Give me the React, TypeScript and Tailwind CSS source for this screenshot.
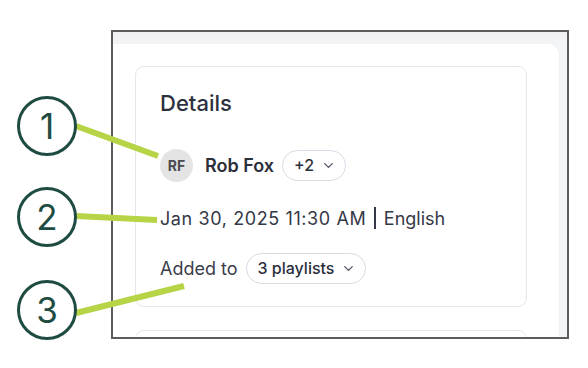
import { ChevronDown } from "lucide-react";

function Pill({ label }: { label: string }) {
  return (
    <span className="inline-flex h-[31px] items-center gap-[7px] rounded-full border border-[#d9dbe4] bg-white pl-[11px] pr-[9px] text-[16px] font-medium text-[#2b2e3b]">
      {label}
      <ChevronDown className="h-[15px] w-[15px] text-[#555866]" strokeWidth={2.2} />
    </span>
  );
}

function Callouts() {
  const circles = [
    { cy: 126, n: "1" },
    { cy: 217, n: "2" },
    { cy: 310, n: "3" },
  ];
  return (
    <svg className="pointer-events-none absolute inset-0" width={588} height={368} viewBox="0 0 588 368">
      <g stroke="#b6d445" strokeWidth={6}>
        <line x1={76} y1={126} x2={158} y2={156} />
        <line x1={76} y1={216} x2={157} y2={220} />
        <line x1={76} y1={313} x2={184} y2={286} />
      </g>
      {circles.map((c) => (
        <g key={c.n}>
          <circle cx={47} cy={c.cy} r={28.5} fill="white" stroke="#1f4c42" strokeWidth={3} />
          <text
            x={47}
            y={c.cy + 12.5}
            textAnchor="middle"
            fill="#1f4c42"
            fontSize={35}
            fontWeight={400}
            fontFamily="Inter, 'Noto Sans', sans-serif"
          >
            {c.n}
          </text>
        </g>
      ))}
    </svg>
  );
}

export default function App() {
  return (
    <div className="relative h-[368px] w-[588px] overflow-hidden bg-white font-['Inter','Noto_Sans',sans-serif]">
      <div className="ml-[111px] mt-[30px] flex h-[309px] w-[458px] flex-col overflow-hidden border-2 border-[#5c5c5c] bg-[#f4f5f7]">
        <div className="h-[12px] shrink-0 bg-gradient-to-b from-[#eef0f3] to-[#f4f5f7]" />
        <div className="mr-[8px] flex-1 rounded-tr-[10px] bg-white pl-[22px] pr-[32px] pt-[22px] shadow-[0_0_2px_rgba(0,0,0,0.06)]">
          <div className="rounded-[9px] border border-[#e6e7eb] px-[24px] pb-[23px] pt-[22px]">
            <h2 className="h-[28px] text-[22px] font-medium leading-[28px] text-[#2d303e]">Details</h2>
            <div className="mt-[31px] flex h-[34px] items-center">
              <span className="grid h-[33px] w-[33px] place-items-center rounded-full bg-[#e4e4e4] text-[14px] font-bold text-[#4b4b4f]">
                RF
              </span>
              <span className="ml-[12px] text-[18px] font-semibold text-[#2b2e3b]">Rob Fox</span>
              <span className="ml-[8px]">
                <Pill label="+2" />
              </span>
            </div>
            <div className="mt-[22px] flex h-[28px] items-center text-[18px] text-[#353846]">
              <span className="tracking-[0.6px]">Jan 30, 2025 11:30 AM</span>
              <span className="mx-[8px] h-[22px] w-[1.5px] bg-[#353846]" />
              <span>English</span>
            </div>
            <div className="mt-[21px] flex h-[30px] items-center gap-[8px] text-[18px] text-[#3a3d4a]">
              <span>Added to</span>
              <Pill label="3 playlists" />
            </div>
          </div>
          <div className="mt-[23px] h-[40px] rounded-[9px] border border-[#e6e7eb]" />
        </div>
      </div>
      <Callouts />
    </div>
  );
}
